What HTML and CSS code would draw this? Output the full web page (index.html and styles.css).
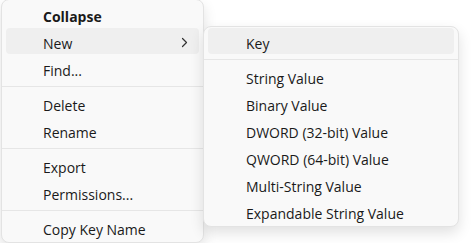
FILE: index.html
```html
<!DOCTYPE html>
<html lang="en">
<head>
<meta charset="utf-8">
<title>Context menu</title>
<link rel="stylesheet" href="styles.css">
</head>
<body>
  <div class="stage">
    <div class="menu main-menu">
      <div class="item bold">Collapse</div>
      <div class="item active has-sub"><span>New</span>
        <svg class="chev" width="7" height="11" viewBox="0 0 7 11"><path d="M1.5 1.5 L5.5 5.5 L1.5 9.5" fill="none" stroke="#333" stroke-width="1.2" stroke-linecap="round" stroke-linejoin="round"/></svg>
      </div>
      <div class="item">Find...</div>
      <div class="sep"></div>
      <div class="item">Delete</div>
      <div class="item">Rename</div>
      <div class="sep"></div>
      <div class="item">Export</div>
      <div class="item">Permissions...</div>
      <div class="sep"></div>
      <div class="item">Copy Key Name</div>
    </div>
    <div class="menu sub-menu">
      <div class="item active">Key</div>
      <div class="sep"></div>
      <div class="item">String Value</div>
      <div class="item">Binary Value</div>
      <div class="item">DWORD (32-bit) Value</div>
      <div class="item">QWORD (64-bit) Value</div>
      <div class="item">Multi-String Value</div>
      <div class="item">Expandable String Value</div>
    </div>
  </div>
</body>
</html>
```
FILE: styles.css
```css
html, body {
  margin: 0;
  padding: 0;
  background: #ffffff;
  overflow: hidden;
}
body {
  font-family: "Segoe UI", "Open Sans", "Noto Sans", sans-serif;
  font-size: 14px;
  color: #1a1a1a;
}
.stage {
  display: flex;
  align-items: flex-start;
}
.menu {
  display: flex;
  flex-direction: column;
  background: #f9f9f9;
  border: 1px solid #e3e3e3;
  border-radius: 8px;
  padding: 1px 0;
  box-shadow: 0 6px 14px rgba(0, 0, 0, 0.12);
  box-sizing: border-box;
}
.main-menu {
  width: 203px;
  margin-left: 1px;
  margin-top: -1px;
}
.sub-menu {
  position: relative;
  z-index: 1;
  width: 256px;
  margin-left: -1px;
  margin-top: 26px;
}
.item {
  height: 26px;
  box-sizing: border-box;
  margin: 0 4px 1px 4px;
  padding: 5px 11px 0 37px;
  display: flex;
  align-items: center;
  justify-content: space-between;
  border-radius: 4px;
  white-space: nowrap;
  line-height: 1;
}
.sub-menu .item {
  padding-left: 38px;
}
.item.active {
  background: #efefef;
}
.item.bold {
  font-weight: 700;
}
.chev {
  display: block;
  margin-top: -2px;
}
.sep {
  height: 1px;
  background: #e6e6e6;
  margin: 4px 0 3px 0;
}
```
